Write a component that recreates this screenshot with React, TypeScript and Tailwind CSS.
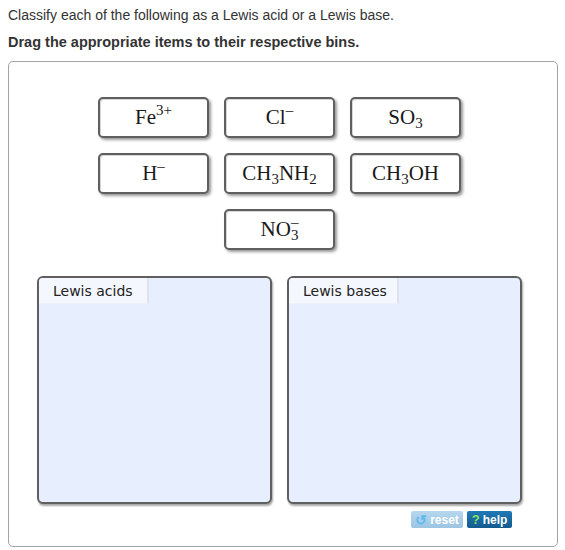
import React from "react";

const serif = "font-['Liberation_Serif',serif]";

function Tile({ children, className = "" }: { children: React.ReactNode; className?: string }) {
  return (
    <div
      className={`flex h-[41px] items-center justify-center rounded-[5px] border-2 border-[#5f5f5f] bg-white text-[21px] leading-none text-[#1a1a1a] shadow-[inset_1px_1px_0_#d8d8d8,2px_2px_3px_rgba(0,0,0,0.4)] ${serif} ${className}`}
    >
      {children}
    </div>
  );
}

const Sub = ({ c }: { c: string }) => <span className="relative top-[6px] text-[15px]">{c}</span>;
const Sup = ({ c }: { c: string }) => <span className="relative -top-[7px] text-[15px]">{c}</span>;

function Bin({ label }: { label: string }) {
  return (
    <div className="h-[228px] w-[235px] rounded-[6px] border-2 border-[#5f5f5f] bg-[#e7eefd] shadow-[1px_2px_2px_rgba(0,0,0,0.35)]">
      <div className="flex h-[26px] w-[110px] items-center rounded-tl-[4px] border-r-2 border-b border-r-[#dfe3ee] border-b-[#eef1fb] bg-[#f5f7fe] pl-[14px] font-['DejaVu_Sans',sans-serif] text-[14px] text-[#222]">
        {label}
      </div>
    </div>
  );
}

export default function App() {
  return (
    <div className="px-2 pt-[6px] font-['Liberation_Sans',Arial,sans-serif] leading-[18px] text-[#333]">
      <p className="text-[14px]">Classify each of the following as a Lewis acid or a Lewis base.</p>
      <p className="mt-[9px] text-[14.5px] font-bold">Drag the appropriate items to their respective bins.</p>

      <div className="mt-[10px] h-[486px] w-[550px] rounded-[5px] border border-[#a3a3a3] bg-white">
        <div className="ml-[89px] mt-[35px] grid w-[363px] grid-cols-[111px_111px_111px] gap-x-[15px] gap-y-[15px]">
          <Tile>
            Fe<Sup c="3+" />
          </Tile>
          <Tile>
            Cl<Sup c="–" />
          </Tile>
          <Tile>
            SO<Sub c="3" />
          </Tile>
          <Tile>
            H<Sup c="–" />
          </Tile>
          <Tile>
            CH<Sub c="3" />NH<Sub c="2" />
          </Tile>
          <Tile>
            CH<Sub c="3" />OH
          </Tile>
          <Tile className="col-start-2">
            NO
            <span className="relative top-[1px] inline-flex flex-col items-center text-[15px]">
              <span className="mb-[4px] leading-[6px]">–</span>
              <span className="leading-[13px]">3</span>
            </span>
          </Tile>
        </div>

        <div className="ml-[28px] mt-[26px] flex gap-[15px]">
          <Bin label="Lewis acids" />
          <Bin label="Lewis bases" />
        </div>

        <div className="ml-[402px] mt-[7px] flex gap-[4px] font-['Liberation_Sans',Arial,sans-serif] text-[12px] font-bold leading-none text-white">
          <div className="flex h-[17px] w-[52px] items-center justify-center gap-[3px] rounded-[2px] bg-gradient-to-b from-[#b5d7ee] to-[#9cc5e3]">
            <span className="text-[14px] font-bold text-[#5cbaf0]">↺</span>
            <span>reset</span>
          </div>
          <div className="flex h-[17px] w-[45px] items-center justify-center gap-[3px] rounded-[2px] bg-gradient-to-b from-[#2179b5] to-[#135b90]">
            <span className="text-[13px] text-[#84e25a]">?</span>
            <span>help</span>
          </div>
        </div>
      </div>
    </div>
  );
}
